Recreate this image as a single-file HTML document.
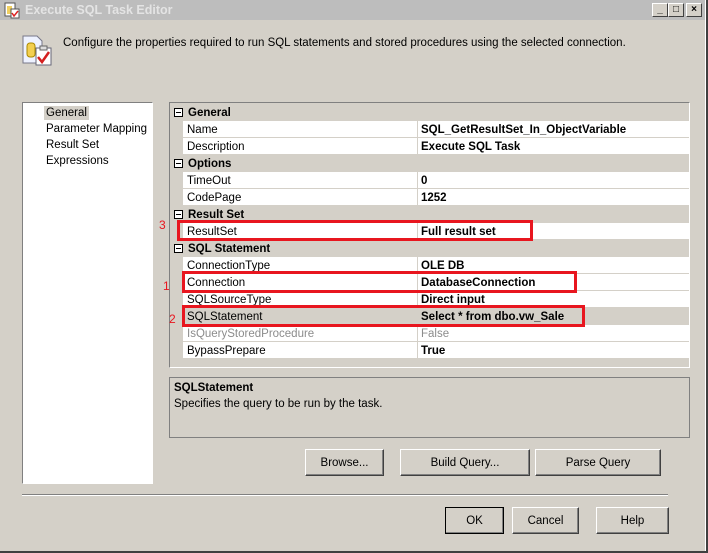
<!DOCTYPE html>
<html><head><style>
*{margin:0;padding:0;box-sizing:border-box}
body{width:708px;height:553px;background:#d4d0c8;font-family:"Liberation Sans",Arial,sans-serif;font-size:11.5px;color:#000;position:relative;overflow:hidden;white-space:nowrap}
.abs{position:absolute}
.title{left:0;top:0;width:708px;height:20px;background:#bdbdbd;color:#e4e4e4;font-weight:bold;font-size:12.5px;line-height:20px;padding-left:25px}
.frameR{right:0;top:0;width:3px;height:553px;background:#404040;border-left:1px solid #fff}
.frameB{left:0;bottom:0;width:708px;height:2px;background:#404040}
.tb{top:3px;width:16px;height:14px;background:#d4d0c8;border:1px solid;border-color:#fff #404040 #404040 #fff;font-size:10px;line-height:12px;text-align:center;font-weight:bold}
.list{left:22px;top:102px;width:131px;height:382px;background:#fff;border:1px solid;border-color:#808080 #fff #fff #808080}
.list div{position:absolute;left:23px;height:14px;line-height:15px}
.grid{left:169px;top:102px;width:521px;height:266px;background:#d4d0c8;border:1px solid;border-color:#808080 #fff #fff #808080;overflow:hidden}
.row{position:absolute;left:0;width:519px;height:17px;line-height:18px}
.hdr{font-weight:bold;padding-left:18px}
.hdr .bx{position:absolute;left:4px;top:4px;width:9px;height:9px;border:1px solid #000;background:#fff}
.hdr .bx:after{content:"";position:absolute;left:1px;top:3px;width:5px;height:1px;background:#000}
.prop .l{position:absolute;left:13px;top:0;width:234px;height:16px;background:#fff;padding-left:4px}
.prop .v{position:absolute;left:248px;top:0;width:271px;height:16px;background:#fff;padding-left:3px;font-weight:bold}
.prop.sel .l,.prop.sel .v{background:#d4d0c8}
.dis{color:#8c8c8c}
.red{border:3px solid #e8161f;position:absolute}
.num{position:absolute;color:#e8161f;font-size:12px}
.desc{left:169px;top:377px;width:521px;height:61px;border:1px solid #808080;padding:2px 4px;line-height:16px}
.btn{height:27px;border:1px solid;border-color:#fff #404040 #404040 #fff;box-shadow:inset -1px -1px 0 #808080;text-align:center;line-height:26px}
</style></head><body>
<div class="abs title">Execute SQL Task Editor</div>
<svg class="abs" style="left:4px;top:2px" width="17" height="17" viewBox="0 0 17 17"><rect x="1" y="1" width="10" height="13" fill="#fff" stroke="#555"/><rect x="3" y="4" width="5" height="8" fill="#f0d060"/><rect x="7" y="7" width="8" height="9" fill="#fff" stroke="#555"/><path d="M8 11l2 3 4-5" stroke="#d22" fill="none" stroke-width="1.5"/></svg>
<div class="abs tb" style="left:652px">_</div>
<div class="abs tb" style="left:668px">□</div>
<div class="abs tb" style="left:686px">×</div>
<div class="abs frameR"></div>
<div class="abs frameB"></div>
<svg class="abs" style="left:22px;top:35px" width="32" height="32" viewBox="0 0 32 32"><path d="M1 1h14l5 5v22H1z" fill="#eef2ff" stroke="#778"/><rect x="5" y="8" width="8" height="14" rx="3" fill="#f3cf50" stroke="#a80"/><rect x="14" y="13" width="15" height="17" fill="#fff" stroke="#667"/><rect x="18" y="11" width="7" height="4" fill="#ddd" stroke="#666"/><path d="M16 22l4 5 7-10" stroke="#d42020" stroke-width="2.5" fill="none"/></svg>
<div class="abs" style="left:63px;top:36px;line-height:14px">Configure the properties required to run SQL statements and stored procedures using the selected connection.</div>
<div class="abs list">
<div style="top:3px;left:21px;padding:0 2px;background:#d4d0c8">General</div>
<div style="top:19px">Parameter Mapping</div>
<div style="top:35px">Result Set</div>
<div style="top:51px">Expressions</div>
</div>
<div class="abs grid">
<div class="row hdr" style="top:1px"><span class="bx"></span>General</div>
<div class="row prop" style="top:18px"><span class="l">Name</span><span class="v">SQL_GetResultSet_In_ObjectVariable</span></div>
<div class="row prop" style="top:35px"><span class="l">Description</span><span class="v">Execute SQL Task</span></div>
<div class="row hdr" style="top:52px"><span class="bx"></span>Options</div>
<div class="row prop" style="top:69px"><span class="l">TimeOut</span><span class="v">0</span></div>
<div class="row prop" style="top:86px"><span class="l">CodePage</span><span class="v">1252</span></div>
<div class="row hdr" style="top:103px"><span class="bx"></span>Result Set</div>
<div class="row prop" style="top:120px"><span class="l">ResultSet</span><span class="v">Full result set</span></div>
<div class="row hdr" style="top:137px"><span class="bx"></span>SQL Statement</div>
<div class="row prop" style="top:154px"><span class="l">ConnectionType</span><span class="v">OLE DB</span></div>
<div class="row prop" style="top:171px"><span class="l">Connection</span><span class="v">DatabaseConnection</span></div>
<div class="row prop" style="top:188px"><span class="l">SQLSourceType</span><span class="v">Direct input</span></div>
<div class="row prop sel" style="top:205px"><span class="l">SQLStatement</span><span class="v">Select * from dbo.vw_Sale</span></div>
<div class="row prop" style="top:222px"><span class="l dis">IsQueryStoredProcedure</span><span class="v dis" style="font-weight:normal">False</span></div>
<div class="row prop" style="top:239px"><span class="l">BypassPrepare</span><span class="v">True</span></div>
</div>
<div class="red" style="left:177px;top:220px;width:356px;height:21px"></div>
<div class="red" style="left:182px;top:271px;width:395px;height:22px"></div>
<div class="red" style="left:182px;top:305px;width:403px;height:22px"></div>
<div class="num" style="left:159px;top:218px">3</div>
<div class="num" style="left:163px;top:279px">1</div>
<div class="num" style="left:169px;top:312px">2</div>
<div class="abs desc"><b>SQLStatement</b><br>Specifies the query to be run by the task.</div>
<div class="abs btn" style="left:305px;top:449px;width:79px">Browse...</div>
<div class="abs btn" style="left:400px;top:449px;width:130px">Build Query...</div>
<div class="abs btn" style="left:535px;top:449px;width:126px">Parse Query</div>
<div class="abs" style="left:22px;top:494px;width:646px;height:2px;border-top:1px solid #808080;border-bottom:1px solid #fff"></div>
<div class="abs btn" style="left:445px;top:507px;width:59px;border:1px solid #000">OK</div>
<div class="abs btn" style="left:512px;top:507px;width:67px">Cancel</div>
<div class="abs btn" style="left:596px;top:507px;width:73px">Help</div>
</body></html>
